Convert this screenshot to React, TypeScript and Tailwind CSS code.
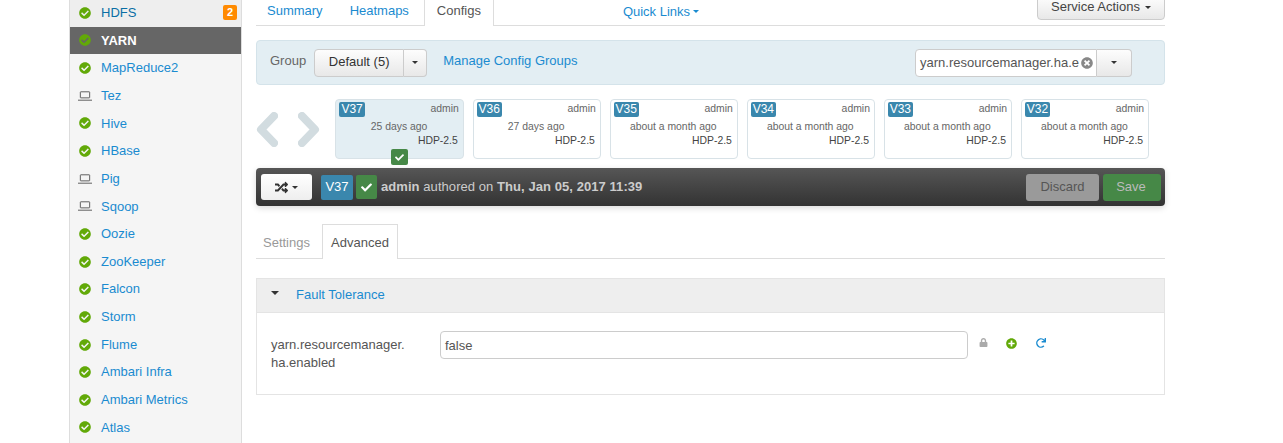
import { FaCheck, FaCheckCircle, FaLock, FaPlusCircle, FaRandom, FaRedo, FaTimesCircle } from "react-icons/fa";

const services = [
  "HDFS", "YARN", "MapReduce2", "Tez", "Hive", "HBase", "Pig", "Sqoop", "Oozie",
  "ZooKeeper", "Falcon", "Storm", "Flume", "Ambari Infra", "Ambari Metrics", "Atlas",
];
const clients = ["Tez", "Pig", "Sqoop"];

const versions = [
  { v: "V37", ago: "25 days ago", active: true },
  { v: "V36", ago: "27 days ago" },
  { v: "V35", ago: "about a month ago" },
  { v: "V34", ago: "about a month ago" },
  { v: "V33", ago: "about a month ago" },
  { v: "V32", ago: "about a month ago" },
];

const Caret = ({ className = "border-t-[#333]" }: { className?: string }) => (
  <span className={`inline-block w-0 h-0 border-x-[3.5px] border-x-transparent border-t-[3.5px] ${className}`} />
);

const LaptopIcon = () => (
  <svg width="15" height="10" viewBox="0 0 15 10" fill="none" stroke="#555" strokeWidth="1">
    <rect x="2.5" y="0.5" width="10" height="6.5" rx="0.5" />
    <path d="M0 9.5h15" />
  </svg>
);

const Chevron = ({ points }: { points: string }) => (
  <svg width="22" height="35" viewBox="0 0 22 35" fill="none" stroke="#d2dce0" strokeWidth="8" strokeLinecap="round" strokeLinejoin="round">
    <polyline points={points} />
  </svg>
);

const btn = "bg-gradient-to-b from-[#fdfdfd] to-[#e8e8e8] border border-[#ccc] text-[#333]";

export default function App() {
  return (
    <div className="w-[1283px] h-[443px] overflow-hidden bg-white flex pl-[69px] font-['Liberation_Sans',Arial,sans-serif] text-[13px] text-[#666]">
      {/* SIDEBAR */}
      <div className="w-[173px] h-full bg-[#f5f5f5] border-x border-[#ddd] shrink-0">
        {services.map((name, i) => (
          <div
            key={name}
            className={`h-[27.65px] flex items-center pl-[8px] pr-[4px] ${
              i === 0 ? "bg-[#eee] -mt-[1px]" : i === 1 ? "bg-[#666]" : ""
            }`}
          >
            <span className="w-[14px] flex justify-center mr-[9px] shrink-0">
              {clients.includes(name) ? <LaptopIcon /> : <FaCheckCircle className="text-[#62a908] text-[12px]" />}
            </span>
            <span className={i === 1 ? "text-white font-bold" : i === 0 ? "text-[#0a6ea5]" : "text-[#1a8bd0]"}>{name}</span>
            {i === 0 && (
              <span className="ml-auto bg-[#ff8a00] text-white font-bold text-[11px] leading-[15px] w-[14px] text-center rounded-[2px]">2</span>
            )}
          </div>
        ))}
      </div>

      {/* MAIN */}
      <div className="w-[909px] ml-[14px] shrink-0">
        {/* TOP TABS */}
        <div className="h-[26px] border-b border-[#ddd] flex items-start relative">
          <span className="text-[#1a8bd0] mt-[1px] ml-[11px]">Summary</span>
          <span className="text-[#1a8bd0] mt-[1px] ml-[27px]">Heatmaps</span>
          <span className="h-[26px] w-[70px] ml-[15px] border-x border-[#ddd] bg-white text-center text-[#555] pt-[1px]">Configs</span>
          <span className="text-[#1a8bd0] mt-[2px] ml-[129px] flex items-center gap-[3px]">
            Quick Links
            <Caret className="border-t-[#1a8bd0]" />
          </span>
          <span className={`${btn} ml-auto -mt-[4px] h-[24px] pb-[2px] w-[128px] rounded-b-[4px] flex items-center justify-center gap-[5px] text-[#444]`}>
            Service Actions
            <Caret />
          </span>
        </div>

        {/* GROUP BAR */}
        <div className="mt-[14px] h-[45px] bg-[#e3eef3] border border-[#d4e3ea] rounded-[4px] flex items-center pl-[13px] pr-[32px]">
          <span className="-mt-[4px]">Group</span>
          <span className={`${btn} ml-[8px] h-[28px] w-[90px] rounded-l-[4px] flex items-center justify-center pb-[2px]`}>Default (5)</span>
          <span className={`${btn} border-l-0 h-[28px] w-[23px] rounded-r-[4px] flex items-center justify-center`}>
            <Caret />
          </span>
          <span className="text-[#1a8bd0] ml-[16px] -mt-[4px]">Manage Config Groups</span>
          <div className="ml-auto flex h-[28px]">
            <div className="w-[182px] bg-white border border-[#ccc] rounded-l-[4px] flex items-center pl-[4px] pr-[3px] justify-between text-[#555]">
              <span className="whitespace-nowrap">yarn.resourcemanager.ha.e</span>
              <FaTimesCircle className="text-[#888] text-[12px] shrink-0" />
            </div>
            <span className={`${btn} border-l-0 w-[35px] rounded-r-[4px] flex items-center justify-center`}>
              <Caret />
            </span>
          </div>
        </div>

        {/* VERSIONS */}
        <div className="mt-[14px] h-[60px] flex items-center">
          <div className="w-[79.45px] flex gap-[20px] shrink-0">
            <Chevron points="18,4 5,17.5 18,31" />
            <Chevron points="4,4 17,17.5 4,31" />
          </div>
          <div className="flex gap-[8.77px]">
            {versions.map((item) => (
              <div
                key={item.v}
                className={`w-[128.3px] h-[60px] border border-[#d8e2e7] rounded-[4px] relative px-[3px] pt-[2px] text-[10.4px] leading-[14px] ${
                  item.active ? "bg-[#e3eef3]" : "bg-white"
                }`}
              >
                <div className="flex justify-between items-start pr-[1px]">
                  <span className="bg-[#3a87ad] text-white text-[12px] leading-[15px] px-[2px] rounded-[2px]">{item.v}</span>
                  <span>admin</span>
                </div>
                <div className="text-center mt-[3px] pr-[1px]">{item.ago}</div>
                <div className="text-right pr-[2px] text-[#444]">HDP-2.5</div>
                {item.active && (
                  <span className="absolute left-[55px] -bottom-[7px] w-[17px] h-[16px] bg-[#468847] rounded-[2px] flex items-center justify-center">
                    <FaCheck className="text-white text-[9px]" />
                  </span>
                )}
              </div>
            ))}
          </div>
        </div>

        {/* CURRENT VERSION BAR */}
        <div className="mt-[9px] h-[38px] rounded-[4px] bg-gradient-to-b from-[#565656] to-[#333] shadow-[0_2px_6px_rgba(0,0,0,0.15)] flex items-center pl-[5px] pr-[4px]">
          <span className="w-[51px] h-[26px] bg-gradient-to-b from-white to-[#eee] rounded-[3px] flex items-center justify-center gap-[4px]">
            <FaRandom className="text-[#333] text-[13px]" />
            <Caret />
          </span>
          <span className="ml-[9px] w-[32px] h-[25px] bg-[#3a87ad] text-white rounded-[2px] flex items-center justify-center">V37</span>
          <span className="ml-[3px] w-[21px] h-[24px] bg-[#468847] rounded-[2px] flex items-center justify-center">
            <FaCheck className="text-white text-[11px]" />
          </span>
          <span className="ml-[4px] text-[#ccc] tracking-[0.005em]">
            <b>admin</b> authored on <b>Thu, Jan 05, 2017 11:39</b>
          </span>
          <span className="ml-auto w-[73px] h-[27px] bg-[#9a9a9a] text-[#555] rounded-[3px] flex items-center justify-center">Discard</span>
          <span className="ml-[4px] w-[58px] h-[27px] bg-[#468847] text-[#bbb] rounded-[3px] flex items-center justify-center pr-[2px]">Save</span>
        </div>

        {/* SUB TABS */}
        <div className="mt-[18px] h-[35px] border-b border-[#ddd] flex">
          <span className="w-[66px] pl-[7px] pt-[9px] text-[#999]">Settings</span>
          <span className="w-[76px] h-[35px] bg-white border border-b-0 border-[#ddd] text-center pt-[8px] text-[#555]">Advanced</span>
        </div>

        {/* PANEL */}
        <div className="mt-[19px] h-[117px] border border-[#e4e4e4]">
          <div className="h-[34px] bg-[#eee] border-b border-[#e4e4e4] flex items-center pl-[14px] pb-[1px]">
            <span className="inline-block w-0 h-0 border-x-[4px] border-x-transparent border-t-[4px] border-t-[#333] -mt-[5px]" />
            <span className="text-[#1a8bd0] ml-[17px]">Fault Tolerance</span>
          </div>
          <div className="flex pl-[14px] pt-[18px]">
            <div className="w-[169px] leading-[18px] text-[#555] pt-[5px]">
              yarn.resourcemanager.
              <br />
              ha.enabled
            </div>
            <div className="w-[528px] h-[28px] border border-[#ccc] rounded-[4px] flex items-center pl-[4px] pt-[1px] text-[#555]">false</div>
            <span className="ml-[11px] mt-[7px] flex items-start">
              <FaLock className="text-[#aaa] text-[9px]" />
              <FaPlusCircle className="text-[#62a908] text-[11px] ml-[18px]" />
              <FaRedo className="text-[#1a8bd0] text-[10px] ml-[19px]" />
            </span>
          </div>
        </div>
      </div>
    </div>
  );
}
